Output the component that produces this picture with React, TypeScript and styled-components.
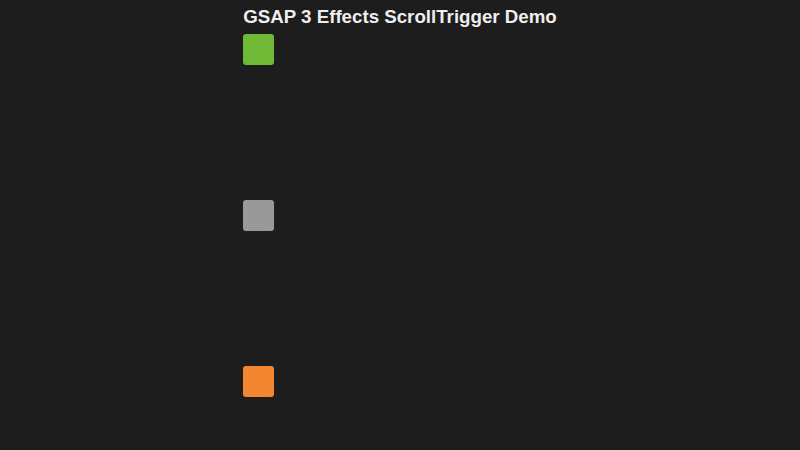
import * as React from 'react'
import styled, { createGlobalStyle } from 'styled-components'

const GlobalStyle = createGlobalStyle`
  html, body {
    margin: 0;
    padding: 0;
    background: #1d1d1d;
    color: #eeeeee;
    font-family: "Liberation Sans", Arial, sans-serif;
  }
`

const Page = styled.div`
  width: fit-content;
  margin: 0 auto;
  padding-top: 5px;
  display: flex;
  flex-direction: column;
  align-items: flex-start;
`

const Title = styled.h3`
  margin: 0 0 5px;
  font-size: 18.72px;
  line-height: 24px;
  font-weight: bold;
  color: #eeeeee;
`

const Boxes = styled.div`
  display: flex;
  flex-direction: column;
  gap: 135px;
`

const Box = styled.div<{ $color: string }>`
  width: 31px;
  height: 31px;
  border-radius: 3px;
  background: ${(p) => p.$color};
`

const colors = ['#6fb936', '#999999', '#f38630']

const App = () => (
  <>
    <GlobalStyle />
    <Page>
      <Title>GSAP 3 Effects ScrollTrigger Demo</Title>
      <Boxes>
        {colors.map((c) => (
          <Box key={c} $color={c} />
        ))}
      </Boxes>
    </Page>
  </>
)

export default App
